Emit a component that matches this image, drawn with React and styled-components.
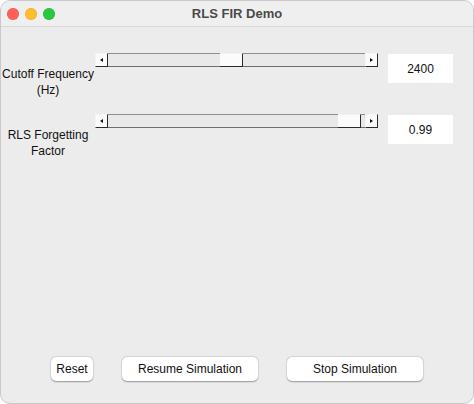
import React from "react";
import styled, { createGlobalStyle } from "styled-components";

const Global = createGlobalStyle`
  html, body { margin: 0; padding: 0; background: #ffffff; }
  body { font-family: "Liberation Sans", Arial, sans-serif; }
`;

const Window = styled.div`
  width: 474px;
  height: 404px;
  box-sizing: border-box;
  border: 1px solid #c9c9c9;
  border-radius: 10px;
  overflow: hidden;
  background: #ececec;
  display: flex;
  flex-direction: column;
`;

const TitleBar = styled.div`
  height: 25px;
  flex: none;
  display: flex;
  align-items: center;
  position: relative;
  background: #f0efef;
  border-bottom: 1px solid #d8d8d8;
  padding-left: 6px;
`;

const Lights = styled.div`
  display: flex;
  gap: 6px;
`;

const Light = styled.span`
  width: 12px;
  height: 12px;
  border-radius: 50%;
  background: ${(p) => p.$c};
  box-shadow: inset 0 0 0 0.5px rgba(0, 0, 0, 0.12);
`;

const Title = styled.div`
  position: absolute;
  left: 0;
  right: 0;
  top: 0;
  bottom: 0;
  display: flex;
  align-items: center;
  justify-content: center;
  font-weight: bold;
  font-size: 13px;
  color: #4a4a4a;
  pointer-events: none;
`;

const Content = styled.div`
  flex: 1;
  display: flex;
  flex-direction: column;
  padding-top: 26px;
`;

const Rows = styled.div`
  display: flex;
  flex-direction: column;
  gap: 16px;
`;

const Row = styled.div`
  display: grid;
  grid-template-columns: 94px 283px 75px;
  column-gap: 0;
  align-items: start;
`;

const LabelCell = styled.div`
  display: flex;
  flex-direction: column;
`;

const Slider = styled.div`
  height: 14px;
  display: flex;
`;

const Label = styled.div`
  margin-top: 0;
  font-size: 12px;
  line-height: 15.5px;
  text-align: center;
  color: #111;
  white-space: nowrap;
`;

const ArrowBtn = styled.div`
  width: 13px;
  flex: none;
  box-sizing: border-box;
  background: #fbfbfb;
  border-right: 1px solid #2a2a2a;
  border-bottom: 1px solid #2a2a2a;
  border-top: 1px solid #f4f4f4;
  border-left: 1px solid #f4f4f4;
  display: flex;
  align-items: center;
  justify-content: center;
`;

const Tri = styled.span`
  width: 0;
  height: 0;
  border-top: 2.5px solid transparent;
  border-bottom: 2.5px solid transparent;
  ${(p) =>
    p.$dir === "left"
      ? "border-right: 3px solid #111;"
      : "border-left: 3px solid #111;"}
`;

const Track = styled.div`
  flex: 1;
  position: relative;
  box-sizing: border-box;
  background: #e9e9e9;
  border-top: 1px solid #8e8e8e;
  border-bottom: 1px solid #6e6e6e;
`;

const Thumb = styled.div`
  position: absolute;
  top: -1px;
  bottom: -1px;
  width: 23px;
  box-sizing: border-box;
  background: #fbfbfb;
  border-top: 1px solid #f2f2f2;
  border-right: 1px solid #2a2a2a;
  border-bottom: 1px solid #2a2a2a;
`;

const Edit = styled.div`
  height: 29px;
  margin-top: 1px;
  margin-left: 10px;
  background: #ffffff;
  display: flex;
  align-items: center;
  justify-content: center;
  font-size: 12px;
  color: #111;
`;

const ButtonBar = styled.div`
  margin-top: auto;
  margin-bottom: 22px;
  padding-left: 50px;
  display: flex;
  gap: 29px;
`;

const Button = styled.button`
  width: ${(p) => p.$w}px;
  height: 24px;
  padding: 0;
  border: none;
  border-radius: 5px;
  background: #ffffff;
  box-shadow: 0 0.5px 1.5px rgba(0, 0, 0, 0.35), 0 0 0 0.5px rgba(0, 0, 0, 0.06);
  font-family: "Liberation Sans", Arial, sans-serif;
  font-size: 12px;
  color: #111;
`;

const THUMB_W = 23;

function ScrollSlider({ fraction }) {
  return (
    <Slider>
      <ArrowBtn>
        <Tri $dir="left" />
      </ArrowBtn>
      <Track>
        <Thumb style={{ left: `calc((100% - ${THUMB_W}px) * ${fraction})` }} />
      </Track>
      <ArrowBtn>
        <Tri $dir="right" />
      </ArrowBtn>
    </Slider>
  );
}

const params = [
  { label: ["Cutoff Frequency", "(Hz)"], fraction: 0.479, value: "2400" },
  { label: ["RLS Forgetting", "Factor"], fraction: 0.985, value: "0.99" },
];

export default function App() {
  return (
    <>
      <Global />
      <Window>
        <TitleBar>
          <Lights>
            <Light $c="#fe5f57" />
            <Light $c="#febc2e" />
            <Light $c="#28c840" />
          </Lights>
          <Title>RLS FIR Demo</Title>
        </TitleBar>
        <Content>
          <Rows>
            {params.map((p) => (
              <Row key={p.value}>
                <LabelCell>
                  <Slider />
                  <Label>
                    {p.label[0]}
                    <br />
                    {p.label[1]}
                  </Label>
                </LabelCell>
                <ScrollSlider fraction={p.fraction} />
                <Edit>{p.value}</Edit>
              </Row>
            ))}
          </Rows>
          <ButtonBar>
            <Button $w={42}>Reset</Button>
            <Button $w={136}>Resume Simulation</Button>
            <Button $w={136}>Stop Simulation</Button>
          </ButtonBar>
        </Content>
      </Window>
    </>
  );
}
